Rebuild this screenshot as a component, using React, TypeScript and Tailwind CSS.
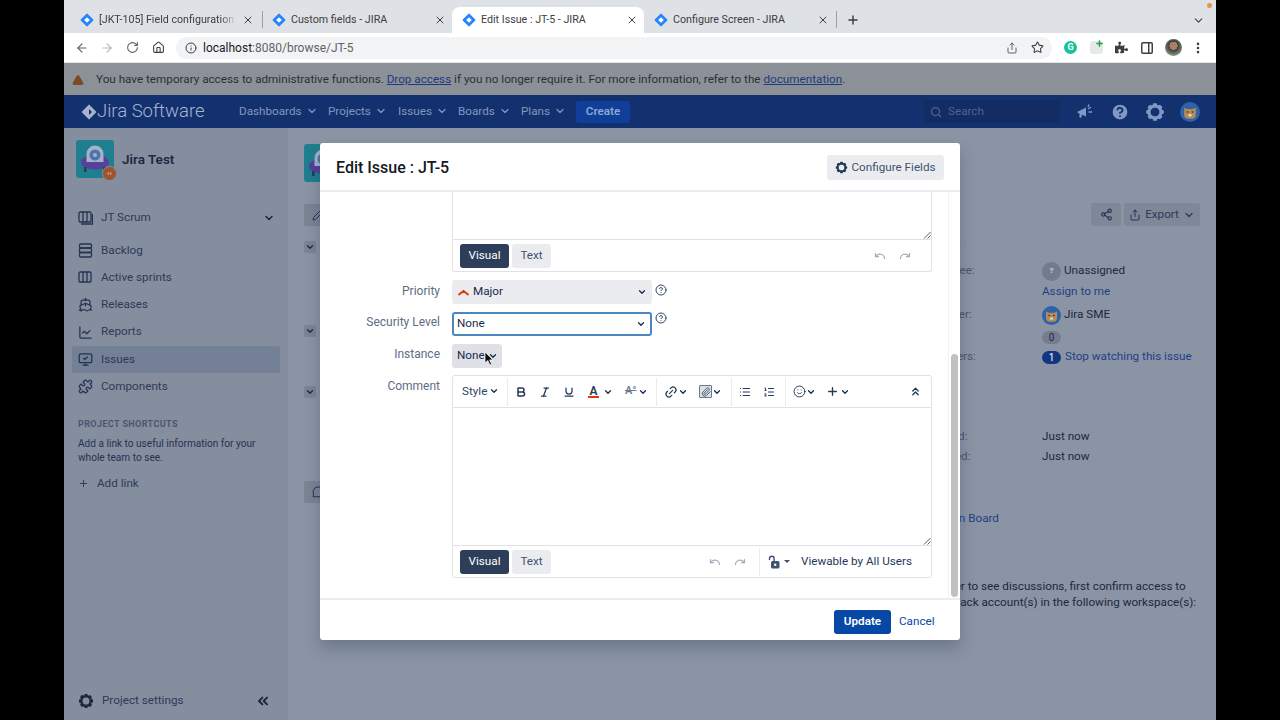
import React from "react";
import {
  ArrowLeft, ArrowRight, RotateCw, Home, Info, Share, Star, PanelRight, EllipsisVertical, X, Plus, ChevronDown,
  Search, CircleHelp, AlertTriangle, Bold, Italic, Underline, Link2, List, ListOrdered, Smile, ChevronsUp, Undo, Redo,
  ChevronsLeft, Ship, ChartLine, MonitorCheck, Puzzle, Share2, Paperclip, MessageCircle, Pencil,
} from "lucide-react";
import { FaPuzzlePiece } from "react-icons/fa";

const FONT = "font-['Roboto','Liberation_Sans',sans-serif]";

function Diamond() {
  return (
    <svg width="14" height="14" viewBox="0 0 14 14" className="shrink-0">
      <rect x="2.2" y="2.2" width="9.6" height="9.6" rx="1" transform="rotate(45 7 7)" fill="#2684ff" />
      <rect x="5" y="5" width="4" height="4" transform="rotate(45 7 7)" fill="#ffffff" />
    </svg>
  );
}

function Tab({ title, active, w, fade }: { title: string; active?: boolean; w: string; fade?: boolean }) {
  return (
    <div className={`${w} h-[26px] flex items-center pl-[10px] pr-[6px] gap-[5px] rounded-t-[8px] shrink-0 ${active ? "bg-white" : ""}`}>
      <Diamond />
      <span className={`flex-1 min-w-0 whitespace-nowrap text-[10.700px] text-[#3c4043] ${fade ? "[mask-image:linear-gradient(to_right,black_88%,transparent)]" : ""}`}>{title}</span>
      <X size={12} strokeWidth={2} className="text-[#3c4043] shrink-0" />
    </div>
  );
}

function TopItem({ label, w }: { label: string; w: string }) {
  return (
    <div className={`${w} flex items-center gap-[4px] text-[11.700px] text-[#8197bf]`}>
      <span>{label}</span>
      <ChevronDown size={12} strokeWidth={2.5} />
    </div>
  );
}

function Gear({ size, color }: { size: number; color: string }) {
  const teeth = [0, 45, 90, 135, 180, 225, 270, 315];
  return (
    <svg width={size} height={size} viewBox="0 0 24 24" className="shrink-0">
      {teeth.map((a) => (
        <rect key={a} x="9.5" y="1.5" width="5" height="5" rx="1" fill={color} transform={`rotate(${a} 12 12)`} />
      ))}
      <circle cx="12" cy="12" r="7.2" fill="none" stroke={color} strokeWidth="3.4" />
    </svg>
  );
}

function CatAvatar({ size }: { size: number }) {
  return (
    <svg width={size} height={size} viewBox="0 0 24 24" className="shrink-0">
      <circle cx="12" cy="12" r="12" fill="#2f62a8" />
      <path d="M5 7l3.5 1.5h7L19 7v8.5a5 5 0 0 1-5 4.500h-4a5 5 0 0 1-5-4.500z" fill="#b58a5a" />
      <circle cx="9" cy="12" r="1" fill="#3a2a1a" />
      <circle cx="15" cy="12" r="1" fill="#3a2a1a" />
      <rect x="10" y="14.500" width="4" height="3" rx="1" fill="#e5d3b6" />
    </svg>
  );
}

function ProjectAvatar({ size }: { size: number }) {
  return (
    <svg width={size} height={size} viewBox="0 0 38 38" className="shrink-0">
      <rect width="38" height="38" rx="3" fill="#1f7f8f" />
      <ellipse cx="19" cy="22" rx="14" ry="7.500" fill="#56409a" />
      <rect x="8" y="27" width="2.500" height="5" fill="#2c3a5c" />
      <rect x="27" y="27" width="2.500" height="5" fill="#2c3a5c" />
      <path d="M10.500 22V14a8.500 8.500 0 0 1 17 0v8z" fill="#a6b2c6" />
      <circle cx="19" cy="15" r="5.500" fill="#4d74ac" />
      <circle cx="19" cy="15" r="2" fill="#a6b2c6" />
    </svg>
  );
}

function StackIcon() {
  return (
    <svg width="15" height="15" viewBox="0 0 15 15" fill="none" stroke="#253352" strokeWidth="1.300">
      <rect x="1.500" y="1" width="12" height="4" rx="1.200" />
      <rect x="1.500" y="5" width="12" height="4.500" rx="1.200" />
      <rect x="1.500" y="9.500" width="12" height="4.500" rx="1.200" />
    </svg>
  );
}

function BoardIcon({ extra }: { extra?: boolean }) {
  return (
    <svg width="15" height="15" viewBox="0 0 15 15" fill="none" stroke="#253352" strokeWidth="1.300">
      <rect x="1" y="2" width="12" height="10" rx="1.200" />
      <path d="M5 2v10M9 2v10" />
      {extra && <path d="M3 14h11.500V4" />}
    </svg>
  );
}

function NavRow({ icon, label, active }: { icon: React.ReactNode; label: string; active?: boolean }) {
  return (
    <div className={`h-[27.200px] flex items-center pl-[5px] gap-[8px] rounded-[2px] text-[11.700px] text-[#2c3a56] ${active ? "bg-[#748096]" : ""}`}>
      <span className="w-[16px] flex justify-center">{icon}</span>
      <span>{label}</span>
    </div>
  );
}

function Sidebar() {
  const ic = "text-[#253352]";
  return (
    <aside className="w-[224px] shrink-0 bg-[#858e9f] h-full flex flex-col pl-2 pr-2">
      <div className="flex items-center pt-3 pl-1 gap-2">
        <div className="relative">
          <ProjectAvatar size={38} />
          <div className="absolute left-[26px] top-[26px] w-[15px] h-[15px] rounded-full bg-[#a0532c] border border-[#858e9f] text-[#e8dcd0] text-[8px] leading-[13px] text-center">‹›</div>
        </div>
        <span className="text-[13.500px] font-semibold text-[#1c2840] mt-[1px]">Jira Test</span>
      </div>
      <div className="mt-[26px] h-[27px] flex items-center pl-[5px] gap-[8px] text-[11.700px] text-[#2c3a56]">
        <span className="w-[16px] flex justify-center"><BoardIcon extra /></span>
        <span className="flex-1">JT Scrum</span>
        <ChevronDown size={12} strokeWidth={3} className="text-[#1c2840] mr-[5px]" />
      </div>
      <div className="mt-[6px]">
        <NavRow icon={<StackIcon />} label="Backlog" />
        <NavRow icon={<BoardIcon />} label="Active sprints" />
        <NavRow icon={<Ship size={15} className={ic} />} label="Releases" />
        <NavRow icon={<ChartLine size={15} className={ic} />} label="Reports" />
        <NavRow icon={<MonitorCheck size={15} className={ic} />} label="Issues" active />
        <NavRow icon={<Puzzle size={15} className={ic} />} label="Components" />
      </div>
      <div className="mt-[17px] pl-[6px] text-[9px] leading-[14px] font-bold text-[#4a5670] tracking-[0.4px]">PROJECT SHORTCUTS</div>
      <div className="mt-[6px] pl-[6px] pr-3 text-[10.100px] leading-[14px] text-[#253352]">Add a link to useful information for your whole team to see.</div>
      <div className="mt-[10px] pl-[6px] flex items-center gap-[8px] text-[11.700px] text-[#2c3a56]">
        <Plus size={11} />
        <span>Add link</span>
      </div>
      <div className="mt-auto mb-[10px] pl-[6px] flex items-center gap-[8px] text-[11.700px] text-[#2c3a56]">
        <Gear size={16} color="#1c2840" />
        <span className="flex-1">Project settings</span>
        <ChevronsLeft size={16} strokeWidth={3} className="text-[#1c2840] mr-[9px]" />
      </div>
    </aside>
  );
}

function DetailRow({ label, children, cls }: { label: string; children?: React.ReactNode; cls: string }) {
  return (
    <div className={`flex items-center text-[11.700px] ${cls}`}>
      <span className="w-[118px] text-[#4a5670]">{label}</span>
      <span className="flex items-center gap-[3px] text-[#1c2840]">{children}</span>
    </div>
  );
}

function Chevron({ cls }: { cls: string }) {
  return (
    <div className={`w-[12px] h-[12px] bg-[#7b8495] rounded-[2px] flex items-center justify-center ${cls}`}>
      <ChevronDown size={10} strokeWidth={3} className="text-[#1c2840]" />
    </div>
  );
}

function Main() {
  return (
    <main className="flex-1 min-w-0 overflow-hidden h-full bg-[#8b94a4] flex">
      <div className="w-[636px] pl-4 shrink-0">
        <div className="mt-4"><ProjectAvatar size={38} /></div>
        <div className="mt-[22px] w-[40px] h-[22px] bg-[#7b8495] rounded-[2px] flex items-center pl-[8px]">
          <Pencil size={12} className="text-[#253352]" />
        </div>
        <Chevron cls="mt-[15px]" />
        <Chevron cls="mt-[72px]" />
        <Chevron cls="mt-[49px]" />
        <div className="mt-[83px] w-[40px] h-[22px] bg-[#7b8495] rounded-[2px] flex items-center pl-[8px]">
          <MessageCircle size={12} className="text-[#253352]" />
        </div>
      </div>
      <div className="flex-1 pr-4 min-w-0">
        <div className="mt-[75px] flex justify-end gap-[3px]">
          <div className="w-[30px] h-[23px] bg-[#7f8899] rounded-[2px] flex items-center justify-center">
            <Share2 size={13} className="text-[#253352]" />
          </div>
          <div className="w-[76px] h-[23px] bg-[#7f8899] rounded-[2px] flex items-center justify-center gap-[4px] text-[11.700px] text-[#2c3a56]">
            <Share size={12} className="text-[#253352]" />
            <span>Export</span>
            <ChevronDown size={12} strokeWidth={2.5} />
          </div>
        </div>
        <div className="mt-[12px] text-[11.700px] font-semibold text-[#1c2840] leading-[16px]">People</div>
        <DetailRow label="Assignee:" cls="mt-[7px] h-[20px]">
          <span className="w-[19px] h-[19px] rounded-full bg-[#737c8d] flex items-center justify-center text-[8px] font-bold text-[#cbd0d8]">?</span>
          Unassigned
        </DetailRow>
        <div className="h-[20px] mt-[1px] pl-[118px] text-[11.700px] text-[#1f3f86] flex items-center">Assign to me</div>
        <DetailRow label="Reporter:" cls="mt-[3px] h-[20px]">
          <span className="flex"><CatAvatar size={19} /></span>
          Jira SME
        </DetailRow>
        <div className="h-[13px] mt-[6px] ml-[118px] w-[19px] rounded-full bg-[#747d8e] text-[10px] text-[#1c2840] flex items-center justify-center">0</div>
        <div className="flex items-center text-[11.700px] mt-[3px] h-[20px]">
          <span className="w-[118px] text-[#4a5670]">Watchers:</span>
          <span className="w-[19px] h-[13px] rounded-full bg-[#14357f] text-white text-[10px] flex items-center justify-center mr-[4px]">1</span>
          <span className="text-[#1f3f86] whitespace-nowrap">Stop watching this issue</span>
        </div>
        <DetailRow label="Created:" cls="mt-[60px] h-[20px]">Just now</DetailRow>
        <DetailRow label="Updated:" cls="h-[20px]">Just now</DetailRow>
        <div className="mt-[42px] h-[20px] flex items-center text-[11.700px] text-[#1f3f86] whitespace-nowrap">View on Board</div>
        <div className="mt-[49px] pl-[1px] text-[11.700px] leading-[16px] text-[#1c2840] whitespace-nowrap">
          <div>In order to see discussions, first confirm access to</div>
          <div>your Slack account(s) in the following workspace(s):</div>
        </div>
      </div>
    </main>
  );
}

function ModeTabs() {
  return (
    <div className="flex gap-[3px] text-[11.700px]">
      <div className="w-[49px] h-[24px] rounded-[3px] bg-[#2c3e5a] text-white flex items-center justify-center">Visual</div>
      <div className="w-[39px] h-[24px] rounded-[3px] bg-[#ebecf0] text-[#42526e] flex items-center justify-center">Text</div>
    </div>
  );
}

function Hist({ cls }: { cls: string }) {
  return (
    <div className={`flex gap-[13px] text-[#a5adba] ${cls}`}>
      <Undo size={12} strokeWidth={2.5} />
      <Redo size={12} strokeWidth={2.5} />
    </div>
  );
}

function HelpIcon({ cls }: { cls?: string }) {
  return <CircleHelp size={12} className={`text-[#344563] ${cls ?? ""}`} />;
}

function FieldRow({ label, children, cls, pt }: { label: string; children: React.ReactNode; cls: string; pt: string }) {
  return (
    <div className={`flex ${cls}`}>
      <div className={`w-[120px] text-right text-[12px] text-[#5e6c84] leading-[16px] shrink-0 ${pt}`}>{label}</div>
      <div className="ml-[12px] flex-1 min-w-0">{children}</div>
    </div>
  );
}

function Sep({ cls }: { cls?: string }) {
  return <div className={`w-px h-[28px] bg-[#ebecf0] shrink-0 ${cls ?? ""}`} />;
}

const Dn = () => <ChevronDown size={10} strokeWidth={3} className="text-[#172b4d] shrink-0" />;

function Editor() {
  const t = "text-[#253858] shrink-0";
  return (
    <div className="w-[480px] border border-[#dfe1e6] rounded-[3px]">
      <div className="h-[32px] border-b border-[#dfe1e6] flex items-center pl-[9px] pr-[9px] text-[11.700px] text-[#344563]">
        <span className="w-[36px] flex items-center gap-[2px] shrink-0">Style<Dn /></span>
        <Sep cls="ml-[9px]" />
        <Bold size={12} strokeWidth={3} className={`${t} ml-[7px]`} />
        <Italic size={12} strokeWidth={2.5} className={`${t} ml-[12px]`} />
        <Underline size={12} strokeWidth={2.5} className={`${t} ml-[12px]`} />
        <span className="ml-[13px] w-[11px] flex flex-col items-center leading-[10px] text-[12px] font-semibold text-[#253858] border-b-2 border-[#de350b] shrink-0">A</span>
        <span className="ml-[4px]"><Dn /></span>
        <span className="ml-[12px] w-[13px] text-[11px] font-medium text-[#6b778c] line-through shrink-0">A°</span>
        <Dn />
        <Sep cls="ml-[8px]" />
        <Link2 size={14} strokeWidth={2} className={`${t} ml-[7px] -rotate-45`} />
        <Dn />
        <span className="ml-[11px] w-[13px] h-[13px] border border-[#6b778c] bg-[#dfe1e6] rounded-[1px] flex items-center justify-center shrink-0">
          <Paperclip size={10} className="text-[#344563]" />
        </span>
        <Dn />
        <Sep cls="ml-[9px]" />
        <List size={12} strokeWidth={2} className={`${t} ml-[7px]`} />
        <ListOrdered size={12} strokeWidth={2} className={`${t} ml-[12px]`} />
        <Sep cls="ml-[10px]" />
        <Smile size={13} strokeWidth={1.8} className={`${t} ml-[7px]`} />
        <Dn />
        <Plus size={13} strokeWidth={2.5} className={`${t} ml-[10px]`} />
        <span className="ml-[1px]"><Dn /></span>
        <ChevronsUp size={13} strokeWidth={2.5} className={`${t} ml-auto`} />
      </div>
      <div className="relative h-[138px] border-b border-[#dfe1e6]">
        <Resize />
      </div>
      <div className="h-[31px] flex items-center pl-[7px] text-[11.700px] text-[#253858]">
        <ModeTabs />
        <Hist cls="ml-auto" />
        <Sep cls="ml-[13px] h-[24px]" />
        <svg width="12" height="14" viewBox="0 0 12 14" className="ml-[8px] shrink-0">
          <path d="M1.500 5V3.500a2.300 2.300 0 0 1 4.600 0V6" fill="none" stroke="#42526e" strokeWidth="1.400" />
          <rect x="3" y="6" width="8.500" height="7.500" rx="1.500" fill="#42526e" />
          <circle cx="7.200" cy="9.700" r="1.200" fill="#fff" />
        </svg>
        <span className="ml-[4px] w-0 h-0 border-x-[3px] border-x-transparent border-t-[3px] border-t-[#42526e]" />
        <span className="ml-[11px] mr-[19px]">Viewable by All Users</span>
      </div>
    </div>
  );
}

function Resize() {
  return (
    <svg width="8" height="8" viewBox="0 0 8 8" className="absolute right-0 bottom-0">
      <path d="M1 7.500L7.500 1M4.500 7.500L7.500 4.500" stroke="#505f79" strokeWidth="1" />
    </svg>
  );
}

function Modal() {
  return (
    <div className="absolute left-[320px] top-[143px] w-[640px] h-[497px] bg-white rounded-[3px] flex flex-col shadow-[0_8px_16px_rgba(9,30,66,0.25)]">
      <div className="h-[49px] shrink-0 border-b-2 border-[#ebecf0] flex items-center justify-between pl-4 pr-4">
        <h2 className="text-[16px] font-medium text-[#14181f] mt-[3px]">Edit Issue : JT-5</h2>
        <div className="w-[117px] h-[25px] mt-[1px] bg-[#ebecf0] rounded-[3px] flex items-center justify-center gap-[3px] pt-[1px] text-[11.700px] text-[#42526e]">
          <Gear size={13} color="#253858" />
          <span>Configure Fields</span>
        </div>
      </div>
      <div className="flex-1 flex min-h-0 overflow-hidden">
        <div className="w-[628px] shrink-0 pb-[20px] min-w-0">
          <div className="pl-[132px]">
            <div className="w-[480px] border border-t-0 border-[#dfe1e6] rounded-b-[3px]">
              <div className="relative h-[48px] border-b border-[#dfe1e6]"><Resize /></div>
              <div className="h-[31px] flex items-center pl-[7px]">
                <ModeTabs />
                <Hist cls="ml-auto mr-[20px]" />
              </div>
            </div>
          </div>
          <FieldRow label="Priority" cls="mt-[8px]" pt="pt-[3px]">
            <div className="flex items-start">
              <div className="w-[200px] h-[24px] rounded-[3px] bg-[#ebecf0] flex items-center pl-[6px] pr-[5px] text-[11.700px] text-[#172b4d]">
                <svg width="11" height="7" viewBox="0 0 11 7" className="shrink-0"><path d="M1 5.500L5.500 2L10 5.500" fill="none" stroke="#de350b" strokeWidth="1.800" strokeLinecap="round" /></svg>
                <span className="ml-[4px] flex-1">Major</span>
                <Dn />
              </div>
              <HelpIcon cls="ml-[3px] mt-[4px]" />
            </div>
          </FieldRow>
          <FieldRow label="Security Level" cls="mt-[8px]" pt="pt-[2px]">
            <div className="flex items-start">
              <div className="w-[200px] h-[24px] rounded-[3px] border-2 border-[#4c86c0] bg-white flex items-center pl-[3px] pr-[4px] text-[11.700px] text-[#172b4d]">
                <span className="flex-1">None</span>
                <Dn />
              </div>
              <HelpIcon cls="ml-[3px] mt-[0px]" />
            </div>
          </FieldRow>
          <FieldRow label="Instance" cls="mt-[8px]" pt="pt-[2px]">
            <div className="relative w-[50px] h-[24px] rounded-[3px] bg-[#dfe1e6] flex items-center pl-[5px] gap-[3px] text-[11.700px] text-[#172b4d]">
              <span>None</span>
              <Dn />
              <svg width="11" height="15" viewBox="0 0 11 15" className="absolute left-[32px] top-[7px]">
                <path d="M1 1v11l2.800-2.500 2 4.500 1.800-.800-2-4.300H9z" fill="#111" stroke="#fff" strokeWidth="0.700" />
              </svg>
            </div>
          </FieldRow>
          <FieldRow label="Comment" cls="mt-[7px]" pt="pt-[3px]">
            <Editor />
          </FieldRow>
        </div>
        <div className="flex-1 border-l border-[#f1f2f4] pl-[2px] pt-[162px] pb-[1px]">
          <div className="w-[7px] h-full rounded-full bg-[#c1c1c1]" />
        </div>
      </div>
      <div className="h-[42px] shrink-0 border-t-2 border-[#ebecf0] flex items-center justify-end pr-[24px] gap-[8px] pt-[3px] text-[11.700px]">
        <div className="w-[57px] h-[24px] rounded-[3px] bg-[#0747a6] text-white font-semibold flex items-center justify-center">Update</div>
        <span className="text-[#0747a6] w-[37px]">Cancel</span>
      </div>
    </div>
  );
}

export default function App() {
  return (
    <div className={`relative w-[1280px] h-[720px] overflow-hidden bg-black flex justify-center ${FONT}`}>
      <div className="w-[1152px] h-full flex flex-col">
        <div className="h-[33px] shrink-0 bg-[#dee1e6] flex items-end pl-[6px] relative">
          <Tab title="[JKT-105] Field configuration -" w="w-[190px]" fade />
          <div className="w-px h-[17px] bg-[#9aa0a6] self-center mt-[6px] ml-[2px] mr-[-1px]" />
          <Tab title="Custom fields - JIRA" w="w-[190px]" />
          <Tab title="Edit Issue : JT-5 - JIRA" active w="w-[192px]" />
          <Tab title="Configure Screen - JIRA" w="w-[191px]" />
          <div className="w-px h-[17px] bg-[#9aa0a6] self-center mt-[6px] ml-[1px]" />
          <div className="h-[26px] flex items-center ml-[9px]"><Plus size={14} strokeWidth={2.5} className="text-[#3c4043]" /></div>
          <div className="h-[26px] flex items-center ml-auto mr-[11px]"><ChevronDown size={13} strokeWidth={2} className="text-[#3c4043]" /></div>
          <span className="absolute right-[4px] top-[3px] w-[5px] h-[5px] rounded-full bg-[#e8954a]" />
        </div>
        <div className="h-[30px] shrink-0 bg-white flex items-center pl-[11px] pr-[11px] border-b border-[#e3e5e8]">
          <ArrowLeft size={14} className="text-[#5f6368]" />
          <ArrowRight size={14} className="text-[#b4b7bb] ml-[11px]" />
          <RotateCw size={13} className="text-[#5f6368] ml-[12px]" />
          <Home size={13} className="text-[#3c4043] ml-[13px]" />
          <div className="ml-[11px] w-[876px] h-[22px] rounded-full bg-[#f1f3f4] flex items-center pl-[9px] pr-[8px] shrink-0">
            <Info size={12} className="text-[#3c4043]" />
            <span className="ml-[6px] text-[12px] text-[#202124]">localhost<span className="text-[#5f6368]">:8080/browse/JT-5</span></span>
            <Share size={12} className="text-[#5f6368] ml-auto" />
            <Star size={13} className="text-[#3c4043] ml-[13px]" />
          </div>
          <span className="ml-[12px] w-[13px] h-[13px] rounded-full bg-[#15c39a] flex items-center justify-center text-white text-[9px] font-bold leading-none shrink-0">G</span>
          <span className="ml-[13px] w-[13px] h-[13px] rounded-[3px] bg-[#e6e9e9] relative shrink-0">
            <Plus size={9} strokeWidth={4} className="absolute -top-[2px] right-[-1px] text-[#22a34a]" />
          </span>
          <FaPuzzlePiece size={13} className="ml-[12px] text-[#3c4043] shrink-0" />
          <PanelRight size={14} strokeWidth={2.5} className="ml-[12px] text-[#3c4043] shrink-0" />
          <span className="ml-[11px] w-[17px] h-[17px] rounded-full shrink-0 bg-[radial-gradient(circle_at_50%_40%,#a87f65_0_30%,#3b3a38_32%,#7f8c7d_70%)]" />
          <EllipsisVertical size={14} strokeWidth={2.5} className="ml-[9px] text-[#3c4043] shrink-0" />
        </div>
        <div className="h-[32px] shrink-0 bg-[#8b9196] flex items-center pl-[8px] pt-[1px] text-[11.700px] text-[#2a3038]">
          <AlertTriangle size={12} fill="#7c4a24" className="text-[#7c4a24] shrink-0" />
          <span className="ml-[12px]">
            You have temporary access to administrative functions. <span className="underline text-[#1d3a80]">Drop access</span> if you no longer require it. For more information, refer to the <span className="underline text-[#1d3a80]">documentation</span>.
          </span>
        </div>
        <div className="h-[33px] shrink-0 bg-[#14316f] flex items-center pl-[17px] pr-[16px]">
          <svg width="16" height="16" viewBox="0 0 16 16" className="shrink-0">
            <path d="M8 0.500L15.500 8 8 15.500 0.500 8z" fill="#a7b4cf" />
            <path d="M8 5L11 8 8 11z" fill="#14316f" />
          </svg>
          <span className="ml-[0px] w-[142px] text-[18.500px] text-[#a7b4cf] font-light whitespace-nowrap">Jira Software</span>
          <TopItem label="Dashboards" w="w-[89px]" />
          <TopItem label="Projects" w="w-[70px]" />
          <TopItem label="Issues" w="w-[60px]" />
          <TopItem label="Boards" w="w-[63px]" />
          <TopItem label="Plans" w="w-[55px]" />
          <div className="w-[54px] h-[22px] rounded-[3px] bg-[#103f99] text-[#8ea6d4] text-[11.700px] font-semibold flex items-center justify-center">Create</div>
          <div className="ml-auto w-[136px] h-[23px] rounded-[3px] bg-[#132c63] flex items-center pl-[6px] gap-[6px] text-[11.700px] text-[#4d6394]">
            <Search size={12} strokeWidth={2.5} />
            <span>Search</span>
          </div>
          <svg width="18" height="18" viewBox="0 0 18 18" className="ml-[16px] shrink-0">
            <path d="M1 9l9-4.500v9L6 11.800l-.8 3.200-2-1 .6-3z" fill="#8298c4" />
            <path d="M12 6l3-2M12.500 9h3.500M12 4l1-2.500" stroke="#8298c4" strokeWidth="1.300" />
          </svg>
          <CircleHelp size={20} fill="#8298c4" strokeWidth={2.3} className="ml-[16px] text-[#14316f]" />
          <span className="ml-[15px] flex"><Gear size={20} color="#8298c4" /></span>
          <span className="ml-[15px] flex"><CatAvatar size={20} /></span>
        </div>
        <div className="flex-1 min-h-0 flex">
          <Sidebar />
          <Main />
        </div>
      </div>
      <Modal />
    </div>
  );
}
